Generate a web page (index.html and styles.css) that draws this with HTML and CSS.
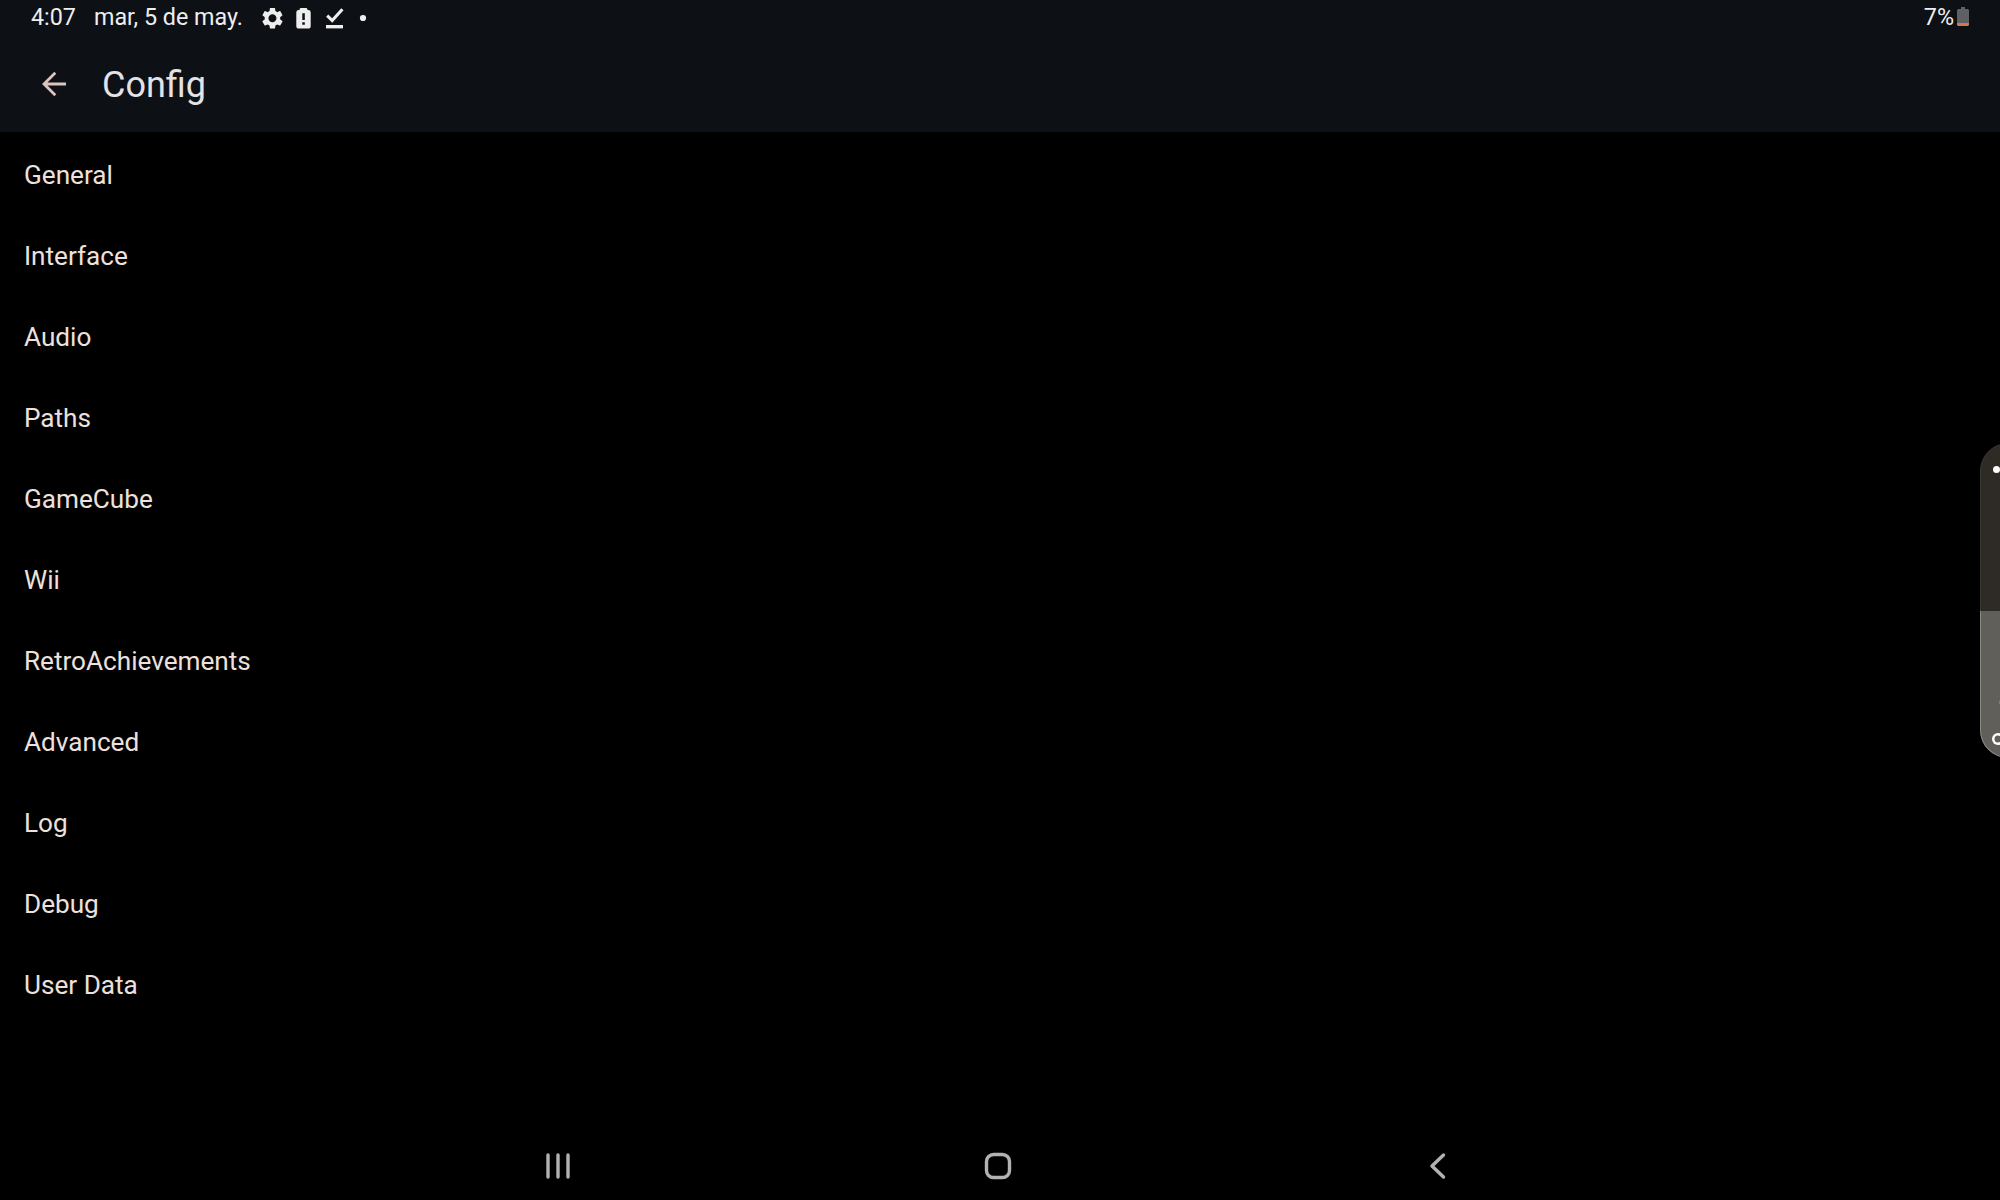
FILE: index.html
```html
<!DOCTYPE html>
<html lang="es">

<head>
    <meta charset="UTF-8">
    <meta name="viewport" content="width=device-width, initial-scale=1.0">
    <title>Config</title>
    <link rel="stylesheet" href="styles.css">
</head>

<body>
    <header class="top">
        <div class="status-bar">
            <span class="clock">4:07</span>
            <span class="date">mar, 5 de may.</span>
            <svg class="status-icons" width="110" height="36" viewBox="260 0 110 36">
                <!-- Settings -->
                <path transform="translate(260.1 5.9) scale(1.03)" fill="#eee"
                    d="M19.43 12.98c.04-.32.07-.64.07-.98s-.03-.66-.07-.98l2.11-1.65c.19-.15.24-.42.12-.64l-2-3.46c-.12-.22-.39-.3-.61-.22l-2.49 1c-.52-.4-1.08-.73-1.69-.98l-.38-2.65C14.46 2.18 14.25 2 14 2h-4c-.25 0-.46.18-.49.42l-.38 2.65c-.61.25-1.17.59-1.69.98l-2.49-1c-.23-.09-.49 0-.61.22l-2 3.46c-.13.22-.07.49.12.64l2.11 1.65c-.04.32-.07.65-.07.98s.03.66.07.98l-2.11 1.65c-.19.15-.24.42-.12.64l2 3.46c.12.22.39.3.61.22l2.49-1c.52.4 1.08.73 1.69.98l.38 2.65c.03.24.24.42.49.42h4c.25 0 .46-.18.49-.42l.38-2.65c.61-.25 1.17-.59 1.69-.98l2.49 1c.23.09.49 0 .61-.22l2-3.46c.12-.22.07-.49-.12-.64l-2.11-1.65zM12 15.9c-2.15 0-3.9-1.75-3.9-3.9s1.75-3.9 3.9-3.9 3.9 1.75 3.9 3.9-1.75 3.9-3.9 3.9z" />
                <!-- Battery warning -->
                <path fill="#eee" d="M301 8h5q1.400 0 1.400 1.400v.6h.9q2.400 0 2.400 2.400v13.600q0 2.600-2.600 2.600h-9.200q-2.600 0-2.600-2.600v-13.600q0-2.400 2.400-2.400h.9v-.6q0-1.400 1.400-1.400z" />
                <path fill="#0d1015" d="M302.300 13.300h2.500v6.700h-2.500zM302.300 22.300h2.500v2.500h-2.500z" />
                <!-- Download done -->
                <path fill="none" stroke="#eee" stroke-width="3.100" d="M327.200 15.700l5 4.900 10.200-11.300" />
                <path fill="#eee" d="M326 25h17v3.400h-17z" />
                <circle cx="363" cy="18" r="3.100" fill="#eee" />
            </svg>
            <div class="battery">
                <span>7%</span>
                <svg width="12" height="20" viewBox="0 0 12 20">
                    <path fill="#5e6064" d="M4 0h4v2h3l1 1v13H0V3l1-1h3z" />
                    <path fill="#d7745a" d="M0 16h12v2l-1 1H1l-1-1z" />
                </svg>
            </div>
        </div>
        <div class="toolbar">
            <svg class="back" width="26" height="26" viewBox="0 0 26 26">
                <path d="M25 13H3.500M14.300 1.700L3 13l11.300 11.300" />
            </svg>
            <h1>Config</h1>
        </div>
    </header>

    <main>
        <ul class="settings">
            <li>General</li>
            <li>Interface</li>
            <li>Audio</li>
            <li>Paths</li>
            <li>GameCube</li>
            <li>Wii</li>
            <li>RetroAchievements</li>
            <li>Advanced</li>
            <li>Log</li>
            <li>Debug</li>
            <li>User Data</li>
        </ul>
    </main>

    <nav class="nav-bar">
        <svg width="28" height="28" viewBox="0 0 28 28">
            <path d="M4 3v22M14 3v22M24 3v22" />
        </svg>
        <svg width="28" height="28" viewBox="0 0 28 28">
            <rect x="2.500" y="2.500" width="23" height="23" rx="7" />
        </svg>
        <svg width="28" height="28" viewBox="0 0 28 28">
            <path d="M19.500 3L8 14l11.500 11" />
        </svg>
    </nav>

    <!-- Volume slider, sliding in from the edge -->
    <div class="volume">
        <div class="volume-level"></div>
        <span class="volume-more"></span>
        <span class="volume-icon"></span>
        <span class="volume-knob"></span>
    </div>
</body>

</html>
```
FILE: styles.css
```css
* {
    margin: 0;
    padding: 0;
    box-sizing: border-box;
}

html {
    overflow: hidden;
}

body {
    position: relative;
    display: flex;
    flex-direction: column;
    height: 100vh;
    overflow: hidden;
    background-color: #000;
    color: #ede0dd;
    font-family: Roboto, sans-serif;
}

.top {
    height: 132px;
    background-color: #0d1015;
}

.status-bar {
    display: flex;
    height: 36px;
    padding: 0 31px;
    color: #eee;
    font-size: 23.300px;
    line-height: 35px;
}

.clock {
    width: 63px;
}

.date {
    width: 166px;
    white-space: nowrap;
}

.battery {
    display: flex;
    gap: 3px;
    margin-left: auto;
}

.battery svg {
    margin-top: 7px;
}

.toolbar {
    display: flex;
    align-items: center;
    height: 96px;
    padding: 0 0 0 41px;
}

.back {
    margin-right: 35px;
    fill: none;
    stroke: #dcc5be;
    stroke-width: 2.800;
}

h1 {
    padding-top: 2px;
    color: #e3e2e6;
    font-size: 36px;
    font-weight: 400;
    line-height: 44px;
}

main {
    flex: 1;
    padding-top: 3px;
}

.settings {
    list-style: none;
    font-size: 26.150px;
}

.settings li {
    height: 81px;
    padding-left: 24px;
    line-height: 81px;
}

.nav-bar {
    display: flex;
    justify-content: center;
    gap: 412px;
    height: 68px;
    padding: 20px 4px 0 0;
}

.nav-bar svg {
    fill: none;
    stroke: #b2b2b2;
    stroke-width: 3.400;
    stroke-linecap: round;
    stroke-linejoin: round;
}

.volume {
    position: absolute;
    top: 443px;
    right: -40px;
    width: 60px;
    height: 315px;
    border: 1px solid #3b3934;
    border-radius: 28px;
    background-color: #2e2b26;
}

.volume-level {
    height: 147px;
    margin: 167px -1px 0;
    border: 1px solid #8b8a84;
    border-top: none;
    border-radius: 0 0 28px 28px;
    background-color: #605f5a;
}

.volume-more,
.volume-icon,
.volume-knob {
    position: absolute;
    border-radius: 50%;
}

.volume-more {
    top: 22px;
    left: 12px;
    width: 7px;
    height: 7px;
    background-color: #fff;
}

.volume-icon {
    top: 256px;
    left: 18px;
    width: 5px;
    height: 5px;
    background-color: #85847f;
}

.volume-knob {
    top: 289px;
    left: 11px;
    width: 12px;
    height: 12px;
    box-shadow: inset 0 0 0 2.500px #fff;
}
```
